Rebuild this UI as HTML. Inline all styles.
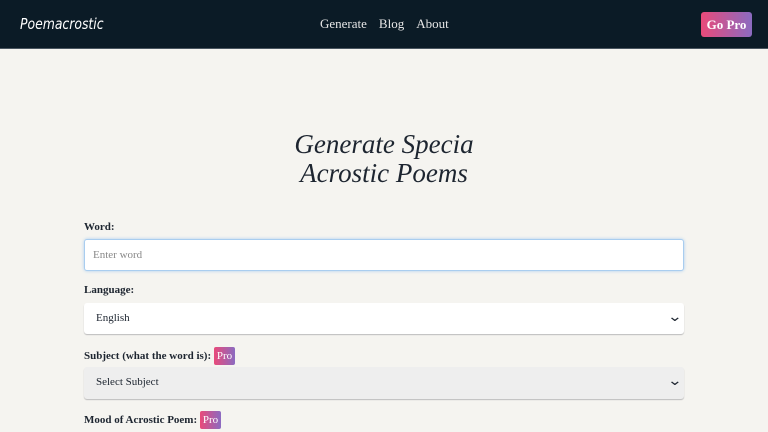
<!DOCTYPE html>
<html><head><style>
body{margin:0;width:768px;height:432px;overflow:hidden;background:#f5f4f0;font-family:"Liberation Serif",serif;color:#1d2530}
.nav{height:48px;background:#0b1b26;position:relative;border-bottom:1px solid #4a5660}
.logo{position:absolute;left:20px;top:15px;font-family:"DejaVu Sans Condensed","Liberation Sans",sans-serif;font-style:italic;color:#fff;font-size:15px;transform:scaleX(.92);transform-origin:left}
.links{position:absolute;left:320px;top:16px;color:#e6e6e6;font-size:13px}
.links span{margin-right:12px}
.gp{position:absolute;left:701px;top:12px;width:51px;height:25px;border-radius:3px;background:linear-gradient(90deg,#e94a7a,#8b6bc1);color:#fff;font-weight:bold;font-size:13px;text-align:center;line-height:25px}
h1{margin:0;position:absolute;top:130px;width:768px;text-align:center;font-style:italic;font-weight:normal;font-size:27px;line-height:29px}
.l{position:absolute;left:84px;font-weight:bold;font-size:11px}
.f{position:absolute;left:84px;width:600px;background:#fff;border-radius:3px;font-size:11px;box-sizing:border-box;box-shadow:0 1px 1px #bbb}
.pro{display:inline-block;background:linear-gradient(90deg,#e94a7a,#8b6bc1);color:#fff;font-weight:normal;font-size:11px;padding:3px 3px;border-radius:2px;margin-left:0;letter-spacing:0}
.ch{position:absolute;right:3px;top:6px;font-size:14px;font-family:"DejaVu Sans",sans-serif;transform:scaleX(1.3)}
</style></head><body>
<div class="nav"><div class="logo">Poemacrostic</div><div class="links"><span>Generate</span><span>Blog</span><span>About</span></div><div class="gp">Go Pro</div></div>
<h1>Generate Specia<br>Acrostic Poems</h1>
<div class="l" style="top:221px">Word:</div>
<div class="f" style="top:239px;height:32px;border:1px solid #a9cdef;box-shadow:0 0 3px #a9cdef;padding:9px 8px;color:#888">Enter word</div>
<div class="l" style="top:284px">Language:</div>
<div class="f" style="top:303px;height:31px;padding:9px 12px">English<span class="ch">⌄</span></div>
<div class="l" style="top:347px">Subject (what the word is): <span class="pro">Pro</span></div>
<div class="f" style="top:367px;height:32px;padding:9px 12px;background:#eeeeee">Select Subject<span class="ch">⌄</span></div>
<div class="l" style="top:411px">Mood of Acrostic Poem: <span class="pro">Pro</span></div>
</body></html>
